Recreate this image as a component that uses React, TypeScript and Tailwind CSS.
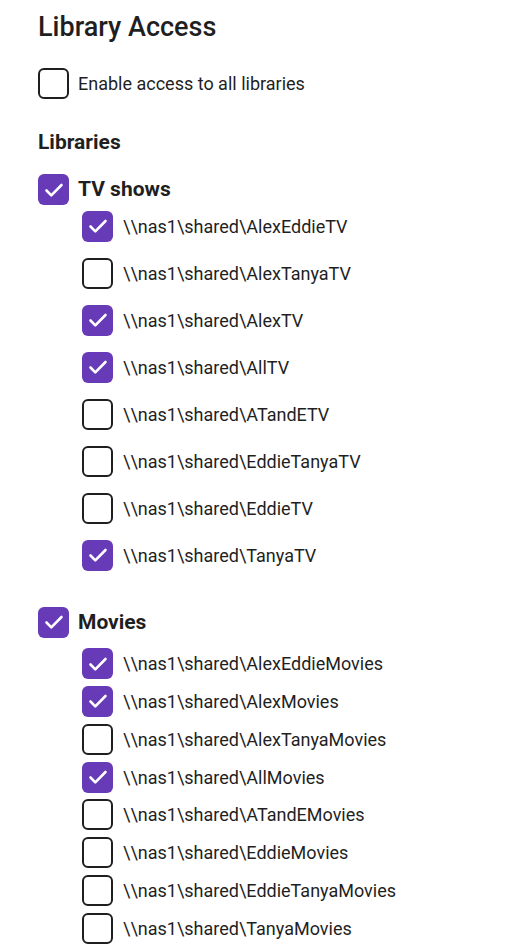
import React from "react";

interface Library {
  name: string;
  paths: { path: string; checked: boolean }[];
}

const libraries: Library[] = [
  {
    name: "TV shows",
    paths: [
      { path: "\\\\nas1\\shared\\AlexEddieTV", checked: true },
      { path: "\\\\nas1\\shared\\AlexTanyaTV", checked: false },
      { path: "\\\\nas1\\shared\\AlexTV", checked: true },
      { path: "\\\\nas1\\shared\\AllTV", checked: true },
      { path: "\\\\nas1\\shared\\ATandETV", checked: false },
      { path: "\\\\nas1\\shared\\EddieTanyaTV", checked: false },
      { path: "\\\\nas1\\shared\\EddieTV", checked: false },
      { path: "\\\\nas1\\shared\\TanyaTV", checked: true },
    ],
  },
  {
    name: "Movies",
    paths: [
      { path: "\\\\nas1\\shared\\AlexEddieMovies", checked: true },
      { path: "\\\\nas1\\shared\\AlexMovies", checked: true },
      { path: "\\\\nas1\\shared\\AlexTanyaMovies", checked: false },
      { path: "\\\\nas1\\shared\\AllMovies", checked: true },
      { path: "\\\\nas1\\shared\\ATandEMovies", checked: false },
      { path: "\\\\nas1\\shared\\EddieMovies", checked: false },
      { path: "\\\\nas1\\shared\\EddieTanyaMovies", checked: false },
      { path: "\\\\nas1\\shared\\TanyaMovies", checked: false },
    ],
  },
];

const Box = ({ checked }: { checked: boolean }) =>
  checked ? (
    <span className="flex h-[31px] w-[31px] shrink-0 items-center justify-center rounded-[6px] bg-[#673ab7]">
      <svg width="24" height="24" viewBox="0 0 24 24" fill="none">
        <path d="M4.5 12.5l4.8 4.8L19.5 7" stroke="white" strokeWidth="2.6" strokeLinecap="round" strokeLinejoin="round" />
      </svg>
    </span>
  ) : (
    <span className="block h-[31px] w-[31px] shrink-0 rounded-[6px] border-[2.5px] border-[#1f1f1f] bg-white" />
  );

export default function App() {
  return (
    <div className="min-h-[946px] bg-white pl-[38px] pt-[10px] text-[#1f1f1f]" style={{ fontFamily: "Roboto, 'Noto Sans', sans-serif" }}>
      <h1 className="text-[27px] font-medium leading-[34px]">Library Access</h1>

      <label className="mt-[24px] flex items-center gap-[9px]">
        <Box checked={false} />
        <span className="text-[18px]">Enable access to all libraries</span>
      </label>

      <h2 className="mt-[28px] text-[21px] font-bold leading-[30px]">Libraries</h2>

      {libraries.map((lib, i) => (
        <div key={lib.name} className={i === 0 ? "mt-[17px]" : "mt-[36px]"}>
          <label className="flex items-center gap-[9px]">
            <Box checked={true} />
            <span className="text-[21px] font-bold">{lib.name}</span>
          </label>
          <div className={i === 0 ? "ml-[44px] mt-[5px] flex flex-col gap-[16px]" : "ml-[44px] mt-[10px] flex flex-col gap-[6.85px]"}>
            {lib.paths.map((p) => (
              <label key={p.path} className="flex items-center gap-[10px]">
                <Box checked={p.checked} />
                <span className="text-[18px]">{p.path}</span>
              </label>
            ))}
          </div>
        </div>
      ))}
    </div>
  );
}
